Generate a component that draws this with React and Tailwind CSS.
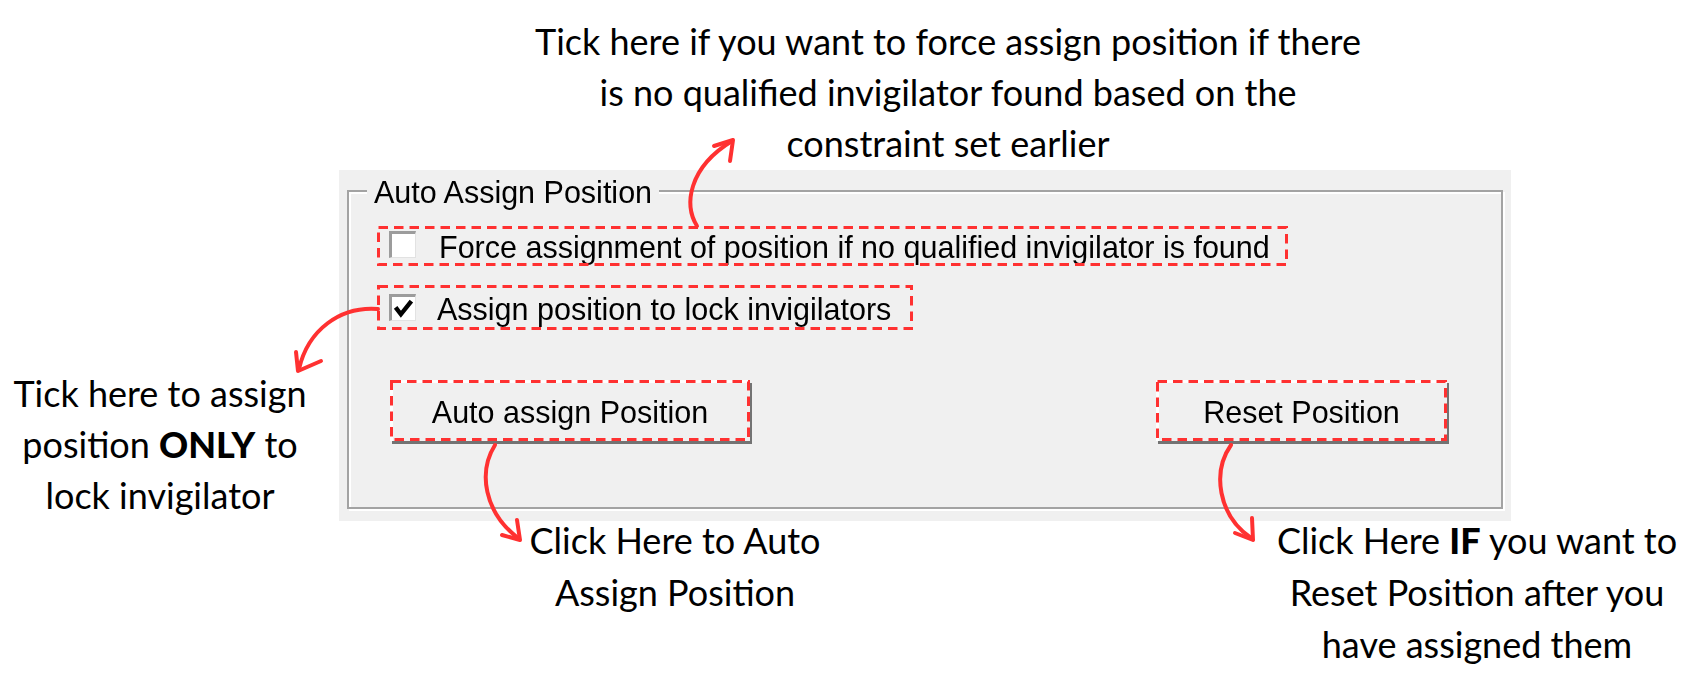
import React from "react"

// red dashed frame drawn over whatever it wraps
function DashBox({ className = "", children }) {
  return (
    <div className={`relative ${className}`}>
      {children}
      <svg className="pointer-events-none absolute inset-0 h-full w-full overflow-visible">
        <rect
          x="1.5"
          y="1.5"
          className="h-[calc(100%-3px)] w-[calc(100%-3px)]"
          fill="none"
          stroke="#ff3131"
          strokeWidth="3"
          strokeDasharray="9.5 6"
        />
      </svg>
    </div>
  )
}

function CheckBox({ checked }) {
  return (
    <span className="flex h-[27px] w-[27px] shrink-0 items-center justify-center border-t-[3px] border-l-[3px] border-r border-b border-t-[#9c9c9c] border-l-[#9c9c9c] border-r-[#e2e2e2] border-b-[#e2e2e2] bg-white blur-[0.3px]">
      {checked && (
        <svg viewBox="0 0 20 20" className="h-[21px] w-[21px]">
          <path d="M2.5 9 L7.5 15.5 L17.5 3" fill="none" stroke="#000" strokeWidth="4.2" strokeLinejoin="miter" />
        </svg>
      )}
    </span>
  )
}

function WinButton({ width, children }) {
  return (
    <DashBox className={`${width} flex h-[61px] items-center justify-center bg-[#f0f0f0] pt-[3px] shadow-[inset_3px_3px_0_#fff,2px_3px_0_#737373]`}>
      <span className="blur-[0.3px]">{children}</span>
    </DashBox>
  )
}

function Panel() {
  return (
    <section className="h-[351px] w-[1172px] bg-[#f0f0f0] px-[8px] pt-[20px] pb-[12px] font-['Liberation_Sans',Arial,sans-serif] text-[30.5px] font-normal leading-none text-black">
      <div className="relative h-full border-2 border-[#a3a3a3] shadow-[inset_2px_2px_0_#fff,2px_2px_0_#fff]">
        <span className="absolute -top-[15px] left-[18px] bg-[#f0f0f0] px-[7px] blur-[0.3px]">Auto Assign Position</span>

        <div className="pl-[28px] pt-[34px]">
          <DashBox className="flex h-[40px] w-[911px] items-start pl-[12px] pt-[5px]">
            <CheckBox />
            <span className="mt-[1px] ml-[23px] blur-[0.3px]">Force assignment of position if no qualified invigilator is found</span>
          </DashBox>
          <DashBox className="mt-[19px] flex h-[45px] w-[536px] items-start pl-[12px] pt-[9px]">
            <CheckBox checked />
            <span className="ml-[21px] blur-[0.3px]">Assign position to lock invigilators</span>
          </DashBox>
        </div>

        <div className="mt-[50px] flex justify-between pr-[54px] pl-[41px]">
          <WinButton width="w-[360px]">Auto assign Position</WinButton>
          <WinButton width="w-[291px]">Reset Position</WinButton>
        </div>
      </div>
    </section>
  )
}

function Arrows() {
  const line = { fill: "none", stroke: "#ff3131", strokeWidth: 4, strokeLinecap: "round", strokeLinejoin: "round" }
  return (
    <svg className="pointer-events-none absolute inset-0 h-full w-full" viewBox="0 0 1697 689">
      {/* force assignment note */}
      <path d="M697 226 C684 205 688 168 732 141" {...line} />
      <path d="M714 146 L733 140 L730 161" {...line} />
      {/* lock invigilators note */}
      <path d="M378 309 C340 306 308 330 299 369" {...line} />
      <path d="M296 352 L298 371 L321 361" {...line} />
      {/* auto assign button */}
      <path d="M495 445 C478 472 484 512 518 538" {...line} />
      <path d="M502 535 L520 540 L517 520" {...line} />
      {/* reset button */}
      <path d="M1231 445 C1212 472 1218 515 1251 538" {...line} />
      <path d="M1235 533 L1253 540 L1252 518" {...line} />
    </svg>
  )
}

export default function App() {
  return (
    <div className="relative h-[689px] w-[1697px] overflow-hidden bg-white font-['Lato',sans-serif] text-[36px] font-normal text-black">
      <div className="h-[170px] pt-[16px] pl-[199px] text-center leading-[51px]">
        <p>
          Tick here if you want to force assign position if there
          <br />
          is no qualified invigilator found based on the
          <br />
          constraint set earlier
        </p>
      </div>

      <div className="flex">
        <div className="w-[339px] pt-[198px] pr-[19px] text-center leading-[51px]">
          Tick here to assign
          <br />
          position <b className="font-black">ONLY</b> to
          <br />
          lock invigilator
        </div>
        <Panel />
      </div>

      <div className="-mt-[7px] flex pl-[475px] leading-[52px]">
        <p className="w-[400px] text-center">
          Click Here to Auto
          <br />
          Assign Position
        </p>
        <p className="ml-[382px] w-[440px] text-center">
          Click Here <b className="font-black">IF</b> you want to
          <br />
          Reset Position after you
          <br />
          have assigned them
        </p>
      </div>

      <Arrows />
    </div>
  )
}
